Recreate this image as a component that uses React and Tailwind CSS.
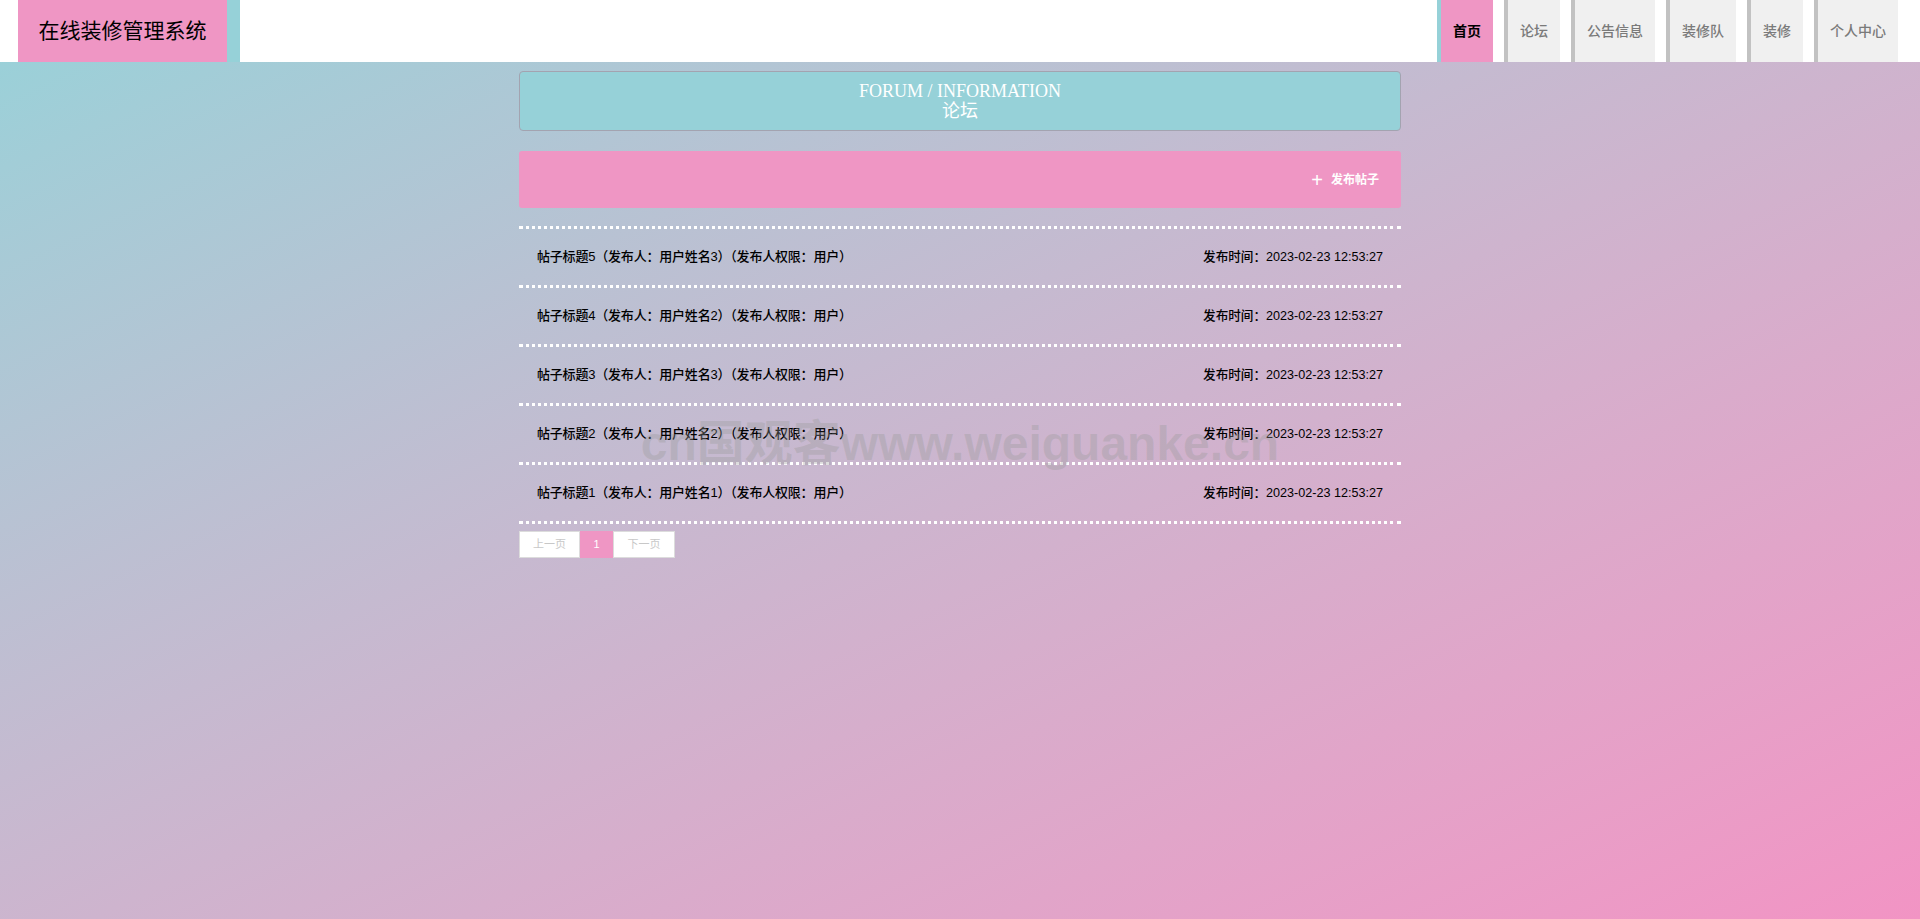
import React from 'react';

const navItems = ['论坛', '公告信息', '装修队', '装修', '个人中心'];

const posts = [
    { title: '帖子标题5', user: '用户姓名3' },
    { title: '帖子标题4', user: '用户姓名2' },
    { title: '帖子标题3', user: '用户姓名3' },
    { title: '帖子标题2', user: '用户姓名2' },
    { title: '帖子标题1', user: '用户姓名1' },
];

const sans = "font-['Liberation_Sans','Noto_Sans_CJK_SC',sans-serif]";

export default function App() {
    return (
        <div className={`relative min-h-[919px] bg-gradient-to-br from-[#96d2d9] to-[#f294c4] ${sans}`}>
            {/* Top bar */}
            <header className="h-[62px] bg-white flex items-stretch justify-between pl-[18px] pr-[22px]">
                <div className="flex items-stretch">
                    <div className="w-[209px] bg-[#ef96c4] flex items-center justify-center text-[21px] text-black">
                        在线装修管理系统
                    </div>
                    <div className="w-[13px] bg-[#96d1d8]" />
                </div>
                <nav className="flex items-stretch gap-[11px]">
                    <a className="flex items-center px-[12px] border-l-4 border-[#96d1d8] bg-[#ef96c4] text-[14px] font-bold text-black">
                        首页
                    </a>
                    {navItems.map((item) => (
                        <a
                            key={item}
                            className="flex items-center px-[12px] border-l-4 border-[#c2c2c2] bg-[#f0f0f0] text-[14px] font-medium text-[#7a7a7a]"
                        >
                            {item}
                        </a>
                    ))}
                </nav>
            </header>

            <main className="w-[882px] mx-auto pt-[9px]">
                {/* Section title */}
                <div className="h-[60px] border border-[#a3a3b0] rounded-[4px] bg-[#96d1d8] flex flex-col items-center justify-center text-white text-[18px] leading-[20px] font-['Liberation_Serif','Noto_Sans_CJK_SC',serif]">
                    <div>FORUM / INFORMATION</div>
                    <div>论坛</div>
                </div>

                {/* Action bar */}
                <div className="mt-[20px] h-[57px] rounded-[3px] bg-[#ef96c4] flex items-center justify-end pr-[22px]">
                    <button className="flex items-center gap-[8px] text-white text-[12px] font-bold">
                        <span className="text-[20px] leading-none font-normal">+</span>
                        发布帖子
                    </button>
                </div>

                {/* Post list */}
                <ul className="mt-[18px]">
                    {posts.map((p) => (
                        <li
                            key={p.title}
                            className="h-[59px] border-t-[3px] border-dotted border-white flex items-center justify-between px-[18px] text-black"
                        >
                            <span className="text-[13px] font-medium tracking-[-0.2px]">
                                {p.title}（发布人：{p.user}）（发布人权限：用户）
                            </span>
                            <span className="text-[12.6px] font-medium">发布时间：2023-02-23 12:53:27</span>
                        </li>
                    ))}
                    <li className="border-t-[3px] border-dotted border-white" />
                </ul>

                {/* Pagination */}
                <div className="mt-[7px] flex text-[11px]">
                    <button className="w-[61px] h-[27px] bg-white border border-[#dcdcdc] text-[#c8c8c8]">上一页</button>
                    <button className="w-[33px] h-[27px] bg-[#ef96c4] text-white">1</button>
                    <button className="w-[62px] h-[27px] bg-white border border-[#dcdcdc] text-[#c8c8c8]">下一页</button>
                </div>
            </main>

            {/* Watermark */}
            <div className="absolute left-1/2 top-[408px] -translate-x-1/2 pointer-events-none text-[48px] font-bold text-[#9a9a9a]/35 whitespace-nowrap">
                cn国观客www.weiguanke.cn
            </div>
        </div>
    );
}
